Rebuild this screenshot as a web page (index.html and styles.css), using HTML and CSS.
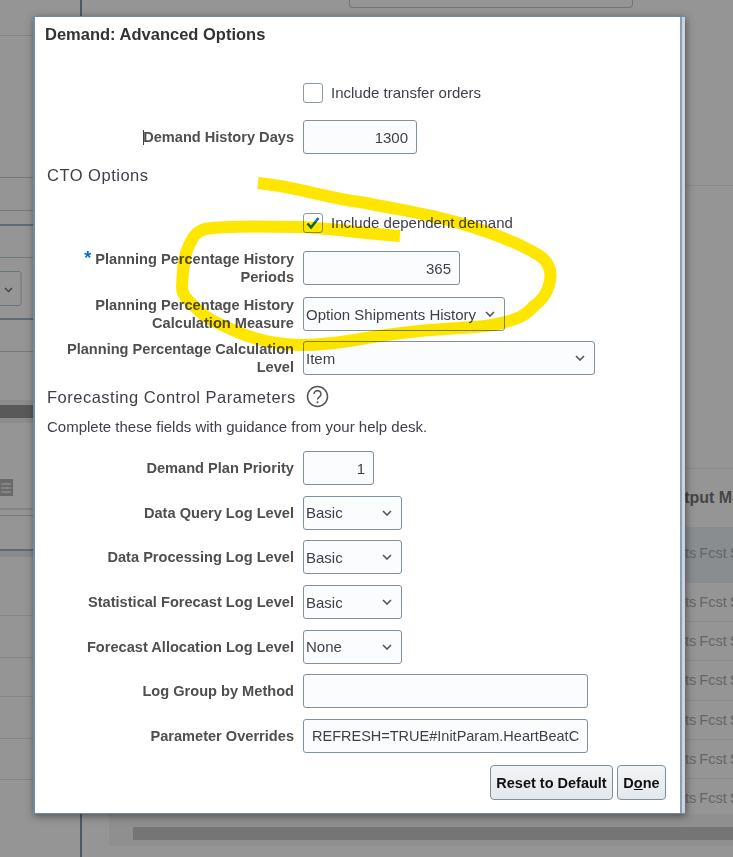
FILE: index.html
```html
<!DOCTYPE html>
<html lang="en">
<head>
    <meta charset="UTF-8">
    <title>Demand: Advanced Options</title>
    <link rel="stylesheet" href="styles.css">
</head>
<body>
    <div class="page">
        <!-- dimmed page behind the dialog -->
        <div class="back-top">
            <div class="back-rail"></div>
            <div class="back-box"></div>
        </div>

        <svg class="back-left" width="33" height="798" viewBox="0 0 33 798">
            <g fill="#727a7c">
                <rect y="19" width="33" height="1" fill="#868686"/>
                <rect y="161" width="33" height="1"/>
                <rect y="194" width="33" height="1"/>
                <rect y="208" width="33" height="2" fill="#5f6b70"/>
                <rect y="241" width="33" height="1"/>
                <rect y="302" width="33" height="2" fill="#5f6b70"/>
                <rect y="335" width="33" height="1"/>
                <rect y="384" width="33" height="23" fill="#8c8c8c"/>
                <rect y="389" width="33" height="13" fill="#595959"/>
                <rect y="492" width="33" height="2" fill="#868686"/>
                <rect y="499" width="33" height="1"/>
                <rect y="533" width="33" height="2" fill="#5f6b70"/>
                <rect y="535" width="33" height="6" fill="#888a8b"/>
                <rect y="599" width="33" height="1" fill="#868686"/>
                <rect y="641" width="33" height="1" fill="#868686"/>
                <rect y="680" width="33" height="1" fill="#868686"/>
                <rect y="722" width="33" height="1" fill="#868686"/>
                <rect y="763" width="33" height="1" fill="#868686"/>
            </g>
            <path d="M-4 255.500H19a2 2 0 0 1 2 2v30a2 2 0 0 1-2 2H-4" fill="none" stroke="#68757b"/>
            <path d="M5 272l3.500 3.500 3.500-3.500" fill="none" stroke="#444" stroke-width="1.500"/>
            <rect y="463" width="13" height="17" fill="#6a6a6a"/>
            <path d="M1 468h10M1 472h10M1 476h10" stroke="#9a9a9a"/>
        </svg>

        <div class="dialog">
            <h1 class="dialog-title">Demand: Advanced Options</h1>

            <div class="row row-check first-check">
                <span></span>
                <label class="check"><span class="box"></span><span class="check-text">Include transfer orders</span></label>
            </div>
            <div class="row history-row">
                <label class="field-label"><span class="cursor"></span>Demand History Days</label>
                <input class="text w-114 num" value="1300">
            </div>

            <h2 class="section cto">CTO Options</h2>

            <div class="row row-check second-check">
                <span></span>
                <label class="check">
                    <span class="box">
                        <svg width="18" height="18" viewBox="0 0 18 18"><path d="M3.500 9.500l3.500 4 7.500-9.500" fill="none" stroke="#0a6fc4" stroke-width="2.600"/></svg>
                    </span><span class="check-text">Include dependent demand</span>
                </label>
            </div>
            <div class="row percent-row">
                <label class="field-label"><span class="req">*</span> Planning Percentage History Periods</label>
                <input class="text w-157 num" value="365">
            </div>
            <div class="row measure-row">
                <label class="field-label">Planning Percentage History Calculation Measure</label>
                <div class="select w-202"><span>Option Shipments History</span><svg class="chev" width="10" height="6" viewBox="0 0 10 6"><path d="M1 1l4 4 4-4"/></svg></div>
            </div>
            <div class="row level-row">
                <label class="field-label">Planning Percentage Calculation Level</label>
                <div class="select w-292"><span>Item</span><svg class="chev" width="10" height="6" viewBox="0 0 10 6"><path d="M1 1l4 4 4-4"/></svg></div>
            </div>

            <div class="section-line">
                <h2 class="section">Forecasting Control Parameters</h2>
                <svg class="help" width="23" height="23" viewBox="0 0 23 23">
                    <circle cx="11.500" cy="11.500" r="10" fill="none" stroke="#555" stroke-width="1.500"/>
                    <path d="M8 9a3.500 3.300 0 1 1 5.600 2.600c-1.300 1-2.100 1.500-2.100 3" fill="none" stroke="#555" stroke-width="1.500"/>
                    <circle cx="11.500" cy="17.300" r="1" fill="#555"/>
                </svg>
            </div>
            <p class="hint">Complete these fields with guidance from your help desk.</p>

            <div class="row priority-row">
                <label class="field-label">Demand Plan Priority</label>
                <input class="text w-71 num" value="1">
            </div>
            <div class="row">
                <label class="field-label">Data Query Log Level</label>
                <div class="select w-99 heavy"><span>Basic</span><svg class="chev" width="10" height="6" viewBox="0 0 10 6"><path d="M1 1l4 4 4-4"/></svg></div>
            </div>
            <div class="row">
                <label class="field-label">Data Processing Log Level</label>
                <div class="select w-99 heavy"><span>Basic</span><svg class="chev" width="10" height="6" viewBox="0 0 10 6"><path d="M1 1l4 4 4-4"/></svg></div>
            </div>
            <div class="row">
                <label class="field-label">Statistical Forecast Log Level</label>
                <div class="select w-99 heavy"><span>Basic</span><svg class="chev" width="10" height="6" viewBox="0 0 10 6"><path d="M1 1l4 4 4-4"/></svg></div>
            </div>
            <div class="row">
                <label class="field-label">Forecast Allocation Log Level</label>
                <div class="select w-99 heavy"><span>None</span><svg class="chev" width="10" height="6" viewBox="0 0 10 6"><path d="M1 1l4 4 4-4"/></svg></div>
            </div>
            <div class="row">
                <label class="field-label">Log Group by Method</label>
                <input class="text w-285">
            </div>
            <div class="row">
                <label class="field-label">Parameter Overrides</label>
                <input class="text w-285 long" value="REFRESH=TRUE#InitParam.HeartBeatCheckInterval=60">
            </div>

            <div class="actions">
                <button class="btn reset">Reset to Default</button>
                <button class="btn done">D<u>o</u>ne</button>
            </div>

            <!-- marker scribble drawn on top of the screenshot -->
            <svg class="scribble" width="652" height="798" viewBox="33 16 652 798">
                <path d="M258 183C300 187 320 197 366 203C400 210 430 214 456 222C490 232 520 243 540 256C551 264 552 275 549 285C546 296 541 300 533 307C525 316 517 319 505 322C490 327 470 327 430 330C400 333 385 335 366 338C340 343 320 345 300 345C270 344 250 338 233 330C215 322 205 318 196 308C186 298 182 295 182 287C183 270 183 262 187 250C192 238 195 232 205 229C220 226 260 226 300 227C330 228 360 233 400 236" fill="none" stroke="#ffe600" stroke-width="12"/>
            </svg>
        </div>

        <div class="back-right">
            <div class="right-top"></div>
            <div class="right-head"><span>Output Mode</span></div>
            <div class="right-row selected"><span>ts Fcst Sales</span></div>
            <div class="right-row"><span>ts Fcst Sales</span></div>
            <div class="right-row"><span>ts Fcst Sales</span></div>
            <div class="right-row"><span>ts Fcst Sales</span></div>
            <div class="right-row"><span>ts Fcst Sales</span></div>
            <div class="right-row"><span>ts Fcst Sales</span></div>
            <div class="right-row"><span>ts Fcst Sales</span></div>
        </div>

        <div class="back-bottom">
            <div class="back-rail"></div>
            <div class="back-scroll"><div class="scroll-thumb"></div></div>
        </div>
    </div>
</body>
</html>
```

FILE: styles.css
```css
* {
    box-sizing: border-box;
}
body {
    margin: 0;
    background-color: #959595;
    font-family: "Liberation Sans", Arial, sans-serif;
    overflow: hidden;
}
.page {
    display: grid;
    grid-template-columns: 33px 652px 48px;
    grid-template-rows: 16px 798px 43px;
    width: 733px;
    height: 857px;
    overflow: hidden;
}

/* backdrop */
.back-top {
    grid-column: 1 / 4;
    display: flex;
}
.back-rail {
    width: 2px;
    margin-left: 80px;
    background-color: #4d5a63;
}
.back-box {
    width: 284px;
    height: 8px;
    margin-left: 267px;
    border: 1px solid #6f7679;
    border-top: none;
    border-radius: 0 0 4px 4px;
}
.back-left {
    display: block;
}
.back-right {
    overflow: hidden;
    padding-top: 169px;
    font-size: 14.500px;
    word-spacing: -1px;
    color: #666;
}
.right-top {
    height: 283px;
    border-top: 1px solid #8a8a8a;
}
.right-head {
    height: 59px;
    padding-top: 20px;
    border-top: 1px solid #8a8a8a;
    font-size: 16px;
    font-weight: bold;
    word-spacing: 0;
    color: #454545;
    white-space: nowrap;
}
.right-head span {
    margin-left: -23px;
}
.right-row {
    height: 39.200px;
    padding-top: 11px;
    border-bottom: 1px solid #8b8b8b;
    white-space: nowrap;
}
.right-row.selected {
    height: 56px;
    padding-top: 18px;
    background-color: #8a8d90;
}
.back-bottom {
    grid-column: 1 / 4;
    display: flex;
}
.back-scroll {
    flex: 1;
    height: 32px;
    margin-left: 27px;
    padding: 13px 0 0 24px;
    background-color: #8f8f8f;
}
.scroll-thumb {
    height: 13px;
    background-color: #757575;
}

/* dialog */
.dialog {
    position: relative;
    z-index: 1;
    background-color: #fff;
    border: 1px solid #6f8ba3;
    border-left-width: 2px;
    border-right: none;
    box-shadow: inset -3px 0 #c9d4dd, inset -5px 0 #88a0b5, 1px 2px 8px rgba(0, 0, 0, 0.45);
}
.dialog-title {
    margin: 8px 0 0 10px;
    font-size: 16.500px;
    line-height: 19px;
    font-weight: bold;
    color: #333;
}
.row {
    display: grid;
    grid-template-columns: 259px 1fr;
    column-gap: 9px;
    align-items: center;
    height: 34px;
    margin-top: 10.700px;
}
.row-check {
    height: 20px;
}
.first-check {
    margin-top: 39px;
}
.history-row {
    margin-top: 17px;
}
.second-check {
    margin-top: 0;
}
.percent-row {
    margin-top: 17px;
}
.measure-row {
    margin-top: 12px;
}
.level-row {
    margin-top: 10px;
}
.priority-row {
    margin-top: 15px;
}
.field-label {
    padding-left: 28px;
    text-align: right;
    font-size: 14.600px;
    line-height: 18px;
    font-weight: bold;
    color: #4f4f4f;
}
.cursor {
    display: inline-block;
    width: 1px;
    height: 15px;
    margin-right: -1px;
    vertical-align: -3px;
    background-color: #444;
}
.req {
    color: #0572ce;
    font-size: 18px;
    line-height: 10px;
}
.check {
    display: flex;
    align-items: center;
    gap: 8px;
    font-size: 15px;
    color: #3f3f4a;
}
.check-text {
    padding-bottom: 2px;
}
.box {
    display: flex;
    align-items: center;
    justify-content: center;
    width: 20px;
    height: 20px;
    background-color: #fff;
    border: 1px solid #8a9aa5;
    border-radius: 3px;
}
.section {
    margin: 0;
    font-size: 16.500px;
    line-height: 20px;
    font-weight: normal;
    letter-spacing: 0.500px;
    color: #3f3f4a;
}
.cto {
    margin: 11px 0 28px 12px;
}
.section-line {
    display: flex;
    align-items: center;
    gap: 10px;
    margin: 11px 0 0 12px;
    height: 23px;
}
.hint {
    margin: 10px 0 0 12px;
    font-size: 15px;
    line-height: 18px;
    color: #3f3f4a;
}
.text,
.select {
    height: 34px;
    background-color: #fbfcfe;
    border: 1px solid #7f929e;
    border-radius: 3px;
    font-family: "Liberation Sans", Arial, sans-serif;
    font-size: 15px;
    color: #3f3f4a;
}
.text {
    display: block;
    padding: 0 8px;
}
.num {
    text-align: right;
}
.long {
    font-size: 14.500px;
}
.select {
    display: flex;
    align-items: center;
    justify-content: space-between;
    padding: 0 9px 0 2px;
}
.heavy {
    border-width: 1.500px;
}
.chev path {
    fill: none;
    stroke: #555;
    stroke-width: 1.600;
}
.w-71 { width: 71px; }
.w-99 { width: 99px; }
.w-114 { width: 114px; }
.w-157 { width: 157px; }
.w-202 { width: 202px; }
.w-285 { width: 285px; }
.w-292 { width: 292px; }
.actions {
    display: flex;
    justify-content: flex-end;
    gap: 4px;
    margin: 12px 19px 0 0;
}
.btn {
    height: 35px;
    padding: 0;
    background: linear-gradient(#f2f4f6, #e4e8eb);
    border: 1px solid #7c919f;
    border-radius: 4px;
    font-family: "Liberation Sans", Arial, sans-serif;
    font-size: 14.500px;
    font-weight: bold;
    color: #111;
}
.reset {
    width: 123px;
}
.done {
    width: 49px;
}
.scribble {
    position: absolute;
    left: -2px;
    top: -1px;
    mix-blend-mode: multiply;
    pointer-events: none;
}
```
